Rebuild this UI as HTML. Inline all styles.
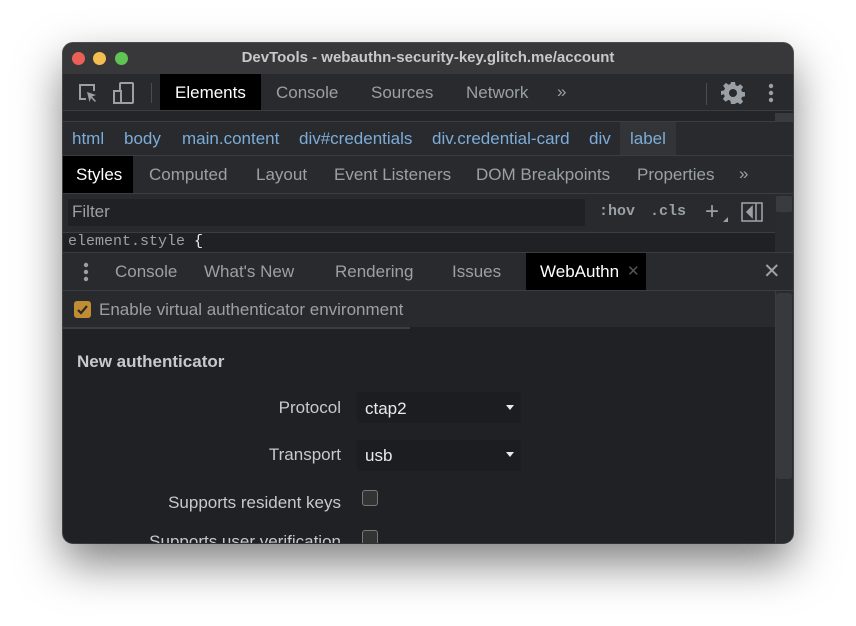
<!DOCTYPE html>
<html><head><style>
*{box-sizing:border-box;margin:0;padding:0}
body{width:856px;height:626px;background:#fff;position:relative;overflow:hidden;font-family:"Liberation Sans",sans-serif}
.win{position:absolute;left:63px;top:43px;width:730px;height:500px;border-radius:10px;overflow:hidden;background:#202124;box-shadow:0 20px 45px rgba(0,0,0,.5),0 0 0 1px #555}
.abs{position:absolute}
.t{position:absolute;white-space:nowrap;font-size:17px;color:#9aa0a6}
.line{position:absolute;left:0;right:0;height:1px;background:#3c3d40}
</style></head><body>
<div class="win">
 <div class="abs" style="left:0;top:0;width:730px;height:31px;background:#38383a"></div>
 <div class="abs" style="left:9px;top:9px;width:13px;height:13px;border-radius:50%;background:#ec5f57"></div>
 <div class="abs" style="left:30px;top:9px;width:13px;height:13px;border-radius:50%;background:#f4bd4f"></div>
 <div class="abs" style="left:52px;top:9px;width:13px;height:13px;border-radius:50%;background:#5fc453"></div>
 <div class="t" style="left:0;width:730px;text-align:center;top:6px;font-size:15px;font-weight:bold;color:#c8c8c8">DevTools - webauthn-security-key.glitch.me/account</div>
 <div class="abs" style="left:0;top:31px;width:730px;height:36px;background:#292a2d"></div>
 <svg class="abs" style="left:14px;top:39px" width="22" height="22" viewBox="0 0 22 22" fill="none" stroke="#9aa0a6" stroke-width="2"><path d="M9 17H3V3h14v6"/><path d="M10 10l9 3-4 1.5L19 19l-1 1-4-4-1.5 4z" fill="#9aa0a6" stroke="none"/></svg>
 <svg class="abs" style="left:50px;top:38px" width="22" height="24" viewBox="0 0 22 24" fill="none" stroke="#9aa0a6" stroke-width="2"><rect x="7" y="2" width="13" height="20" rx="1"/><rect x="1" y="10" width="7" height="12" fill="#292a2d"/></svg>
 <div class="abs" style="left:88px;top:40px;width:1px;height:20px;background:#4a4c50"></div>
 <div class="abs" style="left:97px;top:31px;width:101px;height:36px;background:#000"></div>
 <div class="t" style="left:112px;top:40px;color:#fff">Elements</div>
 <div class="t" style="left:213px;top:40px">Console</div>
 <div class="t" style="left:308px;top:40px">Sources</div>
 <div class="t" style="left:403px;top:40px">Network</div>
 <div class="t" style="left:494px;top:39px">»</div>
 <div class="abs" style="left:643px;top:40px;width:1px;height:22px;background:#4a4c50"></div>
 <svg class="abs" style="left:658px;top:38px" width="24" height="24" viewBox="0 0 24 24"><path fill="#9aa0a6" fill-rule="evenodd" d="M10 1h4l.6 3.2 2 .9 2.7-1.9 2.8 2.8-1.9 2.7.9 2 3.2.6v4l-3.2.6-.9 2 1.9 2.7-2.8 2.8-2.7-1.9-2 .9L14 23h-4l-.6-3.2-2-.9-2.7 1.9-2.8-2.8 1.9-2.7-.9-2L-.1 14v-4l3.2-.6.9-2L2.1 4.7l2.8-2.8 2.7 1.9 2-.9zM12 8a4 4 0 100 8 4 4 0 000-8z"/></svg>
 <svg class="abs" style="left:705px;top:40px" width="6" height="20"><circle cx="3" cy="3" r="2.2" fill="#9aa0a6"/><circle cx="3" cy="10" r="2.2" fill="#9aa0a6"/><circle cx="3" cy="17" r="2.2" fill="#9aa0a6"/></svg>
 <div class="line" style="top:67px"></div>
 <div class="abs" style="left:0;top:68px;width:730px;height:10px;background:#242528"></div>
 <div class="abs" style="left:712px;top:70px;width:18px;height:8px;background:#3a3b3e"></div>
 <div class="line" style="top:78px"></div>
 <div class="abs" style="left:0;top:79px;width:730px;height:33px;background:#292a2d"></div>
 <div class="abs" style="left:557px;top:79px;width:56px;height:33px;background:#333437"></div>
 <div class="t" style="left:9px;top:86px;color:#7cacd8">html</div>
 <div class="t" style="left:61px;top:86px;color:#7cacd8">body</div>
 <div class="t" style="left:119px;top:86px;color:#7cacd8">main.content</div>
 <div class="t" style="left:236px;top:86px;color:#7cacd8">div#credentials</div>
 <div class="t" style="left:369px;top:86px;color:#7cacd8">div.credential-card</div>
 <div class="t" style="left:526px;top:86px;color:#7cacd8">div</div>
 <div class="t" style="left:567px;top:86px;color:#7cacd8">label</div>
 <div class="line" style="top:112px"></div>
 <div class="abs" style="left:0;top:113px;width:730px;height:37px;background:#292a2d"></div>
 <div class="abs" style="left:0;top:113px;width:70px;height:37px;background:#000"></div>
 <div class="t" style="left:13px;top:122px;color:#fff">Styles</div>
 <div class="t" style="left:86px;top:122px">Computed</div>
 <div class="t" style="left:193px;top:122px">Layout</div>
 <div class="t" style="left:271px;top:122px">Event Listeners</div>
 <div class="t" style="left:413px;top:122px">DOM Breakpoints</div>
 <div class="t" style="left:574px;top:122px">Properties</div>
 <div class="t" style="left:676px;top:121px">»</div>
 <div class="line" style="top:150px"></div>
 <div class="abs" style="left:0;top:151px;width:712px;height:38px;background:#292a2d"></div>
 <div class="abs" style="left:5px;top:156px;width:517px;height:27px;background:#202124"></div>
 <div class="t" style="left:9px;top:159px">Filter</div>
 <div class="t" style="left:536px;top:160px;font-family:'Liberation Mono',monospace;font-weight:bold;font-size:15px">:hov</div>
 <div class="t" style="left:587px;top:160px;font-family:'Liberation Mono',monospace;font-weight:bold;font-size:15px">.cls</div>
 <div class="t" style="left:642px;top:155px;font-size:24px">+</div>
 <div class="abs" style="left:660px;top:174px;width:0;height:0;border-left:5px solid transparent;border-bottom:5px solid #9aa0a6"></div>
 <svg class="abs" style="left:678px;top:159px" width="22" height="20" fill="none" stroke="#9aa0a6" stroke-width="1.6"><rect x="1" y="1" width="20" height="18"/><line x1="15" y1="1" x2="15" y2="19"/><path d="M11 5l-5 5 5 5z" fill="#9aa0a6"/></svg>
 <div class="abs" style="left:712px;top:151px;width:18px;height:58px;background:#2a2b2e"></div>
 <div class="abs" style="left:713px;top:153px;width:16px;height:16px;background:#3a3b3e;border-radius:2px"></div>
 <div class="line" style="top:189px;right:18px"></div>
 <div class="t" style="left:5px;top:190px;font-family:'Liberation Mono',monospace;font-size:15px">element.style <span style="color:#e8eaed">{</span></div>
 <div class="line" style="top:209px"></div>
 <div class="abs" style="left:0;top:210px;width:730px;height:37px;background:#292a2d"></div>
 <svg class="abs" style="left:20px;top:219px" width="6" height="20"><circle cx="3" cy="3" r="2.2" fill="#9aa0a6"/><circle cx="3" cy="10" r="2.2" fill="#9aa0a6"/><circle cx="3" cy="17" r="2.2" fill="#9aa0a6"/></svg>
 <div class="t" style="left:52px;top:219px">Console</div>
 <div class="t" style="left:141px;top:219px">What's New</div>
 <div class="t" style="left:272px;top:219px">Rendering</div>
 <div class="t" style="left:389px;top:219px">Issues</div>
 <div class="abs" style="left:463px;top:210px;width:120px;height:37px;background:#000"></div>
 <div class="t" style="left:477px;top:219px;color:#fff">WebAuthn</div>
 <div class="t" style="left:564px;top:219px;font-size:15px;color:#555">✕</div>
 <div class="t" style="left:700px;top:216px;font-size:21px;color:#9aa0a6">✕</div>
 <div class="line" style="top:247px"></div>
 <div class="abs" style="left:0;top:248px;width:712px;height:36px;background:#292a2d"></div>
 <div class="abs" style="left:11px;top:258px;width:17px;height:17px;border-radius:3px;background:#c18d33"></div>
 <svg class="abs" style="left:13px;top:260px" width="13" height="13" fill="none" stroke="#2a2a2a" stroke-width="2.2"><path d="M2 7l3 3 6-7"/></svg>
 <div class="t" style="left:36px;top:257px">Enable virtual authenticator environment</div>
 <div class="abs" style="left:0;top:284px;width:347px;height:2px;background:#3c3d40"></div>
 <div class="abs" style="left:712px;top:248px;width:18px;height:252px;background:#2a2b2e;border-left:1px solid #3c3d40"></div>
 <div class="abs" style="left:713px;top:250px;width:16px;height:186px;background:#38393c;border-radius:3px"></div>
 <div class="t" style="left:14px;top:309px;font-weight:bold;color:#c8c9cb">New authenticator</div>
 <div class="t" style="right:452px;top:355px;color:#c8c9cb">Protocol</div>
 <div class="abs" style="left:294px;top:349px;width:164px;height:31px;background:#1c1d20"></div>
 <div class="t" style="left:302px;top:356px;color:#e8eaed">ctap2</div>
 <div class="abs" style="left:443px;top:362px;border-left:4px solid transparent;border-right:4px solid transparent;border-top:5px solid #e8eaed"></div>
 <div class="t" style="right:452px;top:402px;color:#c8c9cb">Transport</div>
 <div class="abs" style="left:294px;top:397px;width:164px;height:31px;background:#1c1d20"></div>
 <div class="t" style="left:302px;top:403px;color:#e8eaed">usb</div>
 <div class="abs" style="left:443px;top:409px;border-left:4px solid transparent;border-right:4px solid transparent;border-top:5px solid #e8eaed"></div>
 <div class="t" style="right:452px;top:450px;color:#c8c9cb">Supports resident keys</div>
 <div class="abs" style="left:299px;top:447px;width:16px;height:16px;border-radius:3px;border:1.5px solid #777;background:#333"></div>
 <div class="t" style="right:452px;top:489px;color:#c8c9cb">Supports user verification</div>
 <div class="abs" style="left:299px;top:487px;width:16px;height:16px;border-radius:3px;border:1.5px solid #777;background:#333"></div>
</div>
</body></html>
